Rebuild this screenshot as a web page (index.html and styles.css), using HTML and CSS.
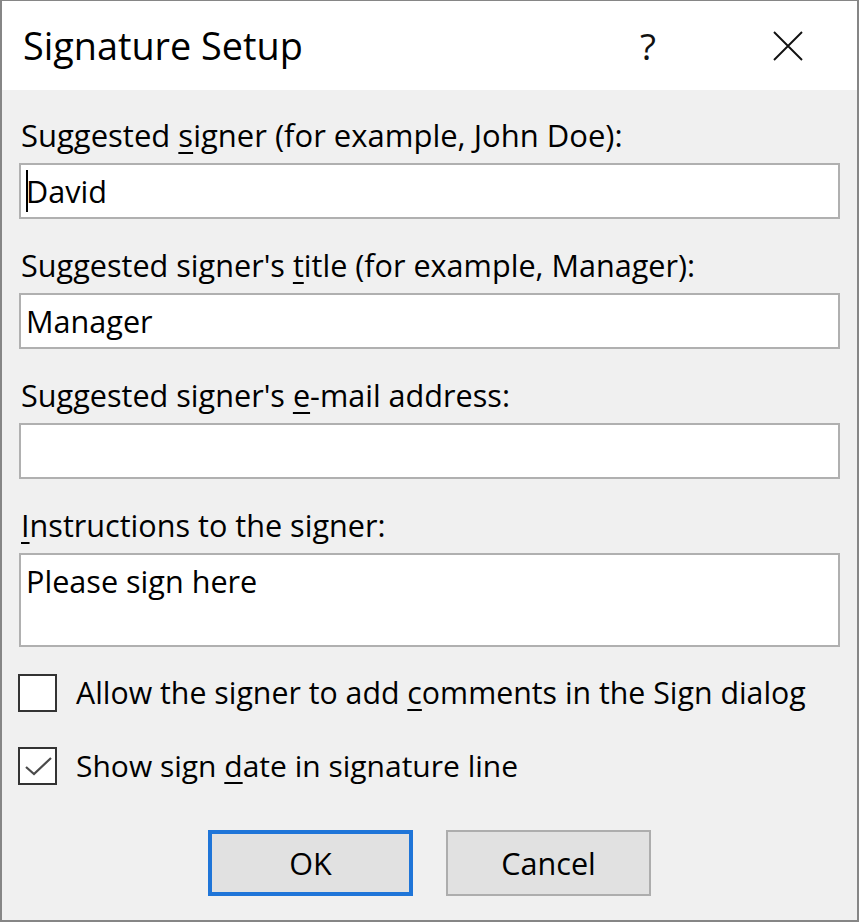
FILE: index.html
```html
<!DOCTYPE html>
<html lang="en">
<head>
<meta charset="utf-8">
<title>Signature Setup</title>
<link rel="stylesheet" href="styles.css">
</head>
<body>
<div class="window">
  <div class="titlebar">
    <span class="title">Signature Setup</span>
    <div class="controls">
      <span class="help">?</span>
      <span class="close">
        <svg width="30" height="30" viewBox="0 0 30 30"><path d="M1 1 L29 29 M29 1 L1 29" stroke="#111" stroke-width="1.9" fill="none"/></svg>
      </span>
    </div>
  </div>
  <div class="content">
    <div class="field">
      <div class="label">Suggested <u>s</u>igner (for example, John Doe):</div>
      <div class="input"><span class="caret"></span>David</div>
    </div>
    <div class="field">
      <div class="label">Suggested signer's <u>t</u>itle (for example, Manager):</div>
      <div class="input">Manager</div>
    </div>
    <div class="field">
      <div class="label">Suggested signer's <u>e</u>-mail address:</div>
      <div class="input"></div>
    </div>
    <div class="field">
      <div class="label"><u>I</u>nstructions to the signer:</div>
      <div class="input textarea">Please sign here</div>
    </div>
    <div class="check first">
      <span class="box"></span>
      <span class="check-label">Allow the signer to add <u>c</u>omments in the Sign dialog</span>
    </div>
    <div class="check second">
      <span class="box">
        <svg width="34" height="34" viewBox="0 0 34 34"><path d="M5 18 L13 25 L30 9" stroke="#4a4a4a" stroke-width="2.2" fill="none"/></svg>
      </span>
      <span class="check-label">Show sign <u>d</u>ate in signature line</span>
    </div>
    <div class="buttons">
      <div class="btn default">OK</div>
      <div class="btn">Cancel</div>
    </div>
  </div>
</div>
</body>
</html>
```

FILE: styles.css
```css
html, body {
  margin: 0;
  padding: 0;
  background: #ffffff;
}

body {
  font-family: "Open Sans", "Noto Sans", sans-serif;
  color: #000;
}

.window {
  width: 859px;
  box-sizing: border-box;
  border: 2px solid #868686;
  border-top-width: 1px;
  background: #f0f0f0;
}

.titlebar {
  height: 89px;
  background: #ffffff;
  display: flex;
  align-items: center;
  padding-left: 21px;
}

.title {
  font-size: 37.8px;
  line-height: 89px;
  color: #000;
}

.controls {
  margin-left: auto;
  display: flex;
  align-items: center;
  margin-right: 39px;
  gap: 76px;
}

.help {
  width: 60px;
  text-align: center;
  font-size: 37px;
  line-height: 89px;
  color: #111;
  margin-right: 4px;
}

.close {
  width: 60px;
  height: 89px;
  display: flex;
  align-items: center;
  justify-content: center;
}

.content {
  padding: 25px 17px 24px 17px;
  font-size: 30.6px;
  line-height: 40px;
}

.field {
  margin-bottom: 26px;
}

.label {
  padding-left: 2px;
  margin-bottom: 8px;
  white-space: nowrap;
}

.field:first-child .label {
  font-size: 31px;
}

u {
  text-decoration-thickness: 2px;
  text-underline-offset: 5px;
}

.input {
  position: relative;
  height: 56px;
  box-sizing: border-box;
  border: 2px solid #b0b0b0;
  background: #ffffff;
  padding: 6px 5px;
  white-space: nowrap;
}

.input.textarea {
  height: 94px;
}

.caret {
  position: absolute;
  left: 5px;
  top: 5px;
  width: 2px;
  height: 42px;
  background: #000;
}

.check {
  display: flex;
  align-items: center;
  height: 40px;
  gap: 19px;
  margin-left: -1px;
}

.check.first {
  margin-bottom: 33px;
}

.check.second {
  margin-bottom: 44px;
}

.box {
  width: 39px;
  height: 38px;
  box-sizing: border-box;
  border: 2px solid #333333;
  background: #ffffff;
  display: flex;
  align-items: center;
  justify-content: center;
}

.check-label {
  white-space: nowrap;
  font-size: 30.3px;
}

.second .check-label {
  font-size: 30px;
}

.buttons {
  display: flex;
  justify-content: center;
  gap: 33px;
}

.btn {
  width: 205px;
  height: 66px;
  box-sizing: border-box;
  border: 2px solid #adadad;
  background: #e1e1e1;
  display: flex;
  align-items: center;
  justify-content: center;
}

.btn.default {
  border: 4px solid #1f75d8;
}
```
